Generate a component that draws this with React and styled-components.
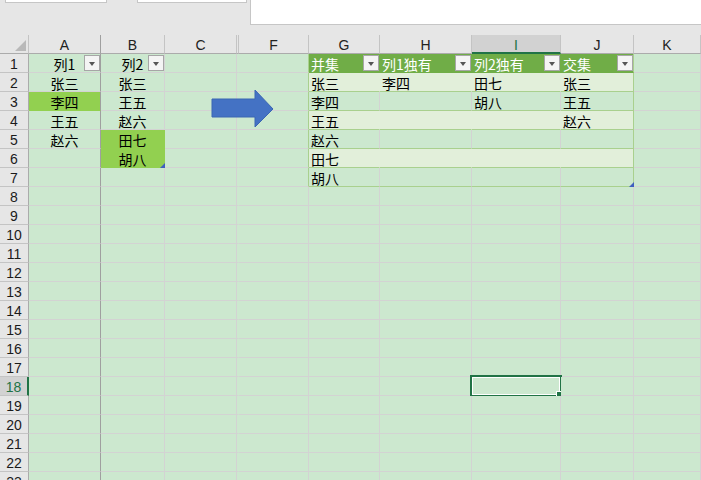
import React from "react";
import styled, { createGlobalStyle } from "styled-components";

const GlobalStyle = createGlobalStyle`
  html, body {
    margin: 0;
    padding: 0;
    background: #e6e6e6;
  }
`;

const BASE = "#cce8cf";
const GRID = "#d3d3d3";
const FROZEN = "#9f9f9f";
const HL = "#92d050";
const T_HEAD = "#70ad47";
const T_BAND = "#e2efda";
const T_LINE = "#a9d08e";
const SEL = "#217346";

const columns = [
  { key: "A", label: "A", width: "72px" },
  { key: "B", label: "B", width: "64px" },
  { key: "C", label: "C", width: "72px" },
  { key: "DE", label: "", width: "2px" },
  { key: "F", label: "F", width: "70px" },
  { key: "G", label: "G", width: "71px" },
  { key: "H", label: "H", width: "92px" },
  { key: "I", label: "I", width: "89px" },
  { key: "J", label: "J", width: "73px" },
  { key: "K", label: "K", width: "1fr" },
];

const values = {
  A: ["列1", "张三", "李四", "王五", "赵六"],
  B: ["列2", "张三", "王五", "赵六", "田七", "胡八"],
  G: ["并集", "张三", "李四", "王五", "赵六", "田七", "胡八"],
  H: ["列1独有", "李四"],
  I: ["列2独有", "田七", "胡八"],
  J: ["交集", "张三", "王五", "赵六"],
};

const highlighted = { A3: true, B5: true, B6: true };
const tableCols = ["G", "H", "I", "J"];
const ROWS = 23;
const SELECTED = { col: "I", row: 18 };

export default function App() {
  const cellProps = (key, row) => {
    const inTable = tableCols.includes(key) && row <= 7;
    const hl = highlighted[key + row];
    let bg = BASE;
    let rb = GRID;
    let bb = GRID;
    let color = "#000";
    if (key === "A") rb = FROZEN;
    if (key === "DE") rb = BASE;
    if (key === "F" && row <= 7) rb = T_LINE;
    if (hl) {
      bg = HL;
      bb = HL;
      if (key !== "A") rb = HL;
    }
    if (inTable) {
      if (row === 1) {
        bg = T_HEAD;
        rb = T_HEAD;
        bb = T_HEAD;
        color = "#fff";
      } else {
        bb = T_LINE;
        if (row % 2 === 0) {
          bg = T_BAND;
          rb = T_BAND;
        }
      }
      if (key === "J") rb = T_LINE;
    }
    return { $bg: bg, $rb: rb, $bb: bb, $color: color, $left: inTable };
  };

  const rows = [];
  for (let r = 1; r <= ROWS; r++) {
    const isSelRow = r === SELECTED.row;
    rows.push(
      <RowHead key={"rh" + r} $active={isSelRow}>
        {r}
      </RowHead>
    );
    columns.forEach((c) => {
      const text = (values[c.key] || [])[r - 1];
      const hasFilter = r === 1 && (c.key === "A" || c.key === "B" || tableCols.includes(c.key));
      rows.push(
        <Cell key={c.key + r} {...cellProps(c.key, r)}>
          {text}
          {hasFilter && <FilterButton />}
          {((c.key === "B" && r === 6) || (c.key === "J" && r === 7)) && <ResizeMark />}
          {c.key === SELECTED.col && isSelRow && (
            <Selection>
              <FillHandle />
            </Selection>
          )}
        </Cell>
      );
    });
  }

  return (
    <Page>
      <GlobalStyle />
      <TopBar>
        <NameBox />
        <FuncBox />
        <FormulaInput />
      </TopBar>
      <Sheet>
        <Corner />
        {columns.map((c) => (
          <ColHead key={c.key} $active={c.key === SELECTED.col} $frozen={c.key === "A"}>
            {c.label}
          </ColHead>
        ))}
        {rows}
        <Arrow width="64" height="40" viewBox="0 0 64 40">
          <path d="M1 10 H44 V1 L62 20 L44 38 V28 H1 Z" fill="#4472c4" stroke="#3b66b3" strokeWidth="1" />
        </Arrow>
      </Sheet>
    </Page>
  );
}

const Page = styled.div`
  width: 701px;
  height: 480px;
  overflow: hidden;
  background: #e6e6e6;
  font-family: "Noto Sans CJK SC", "Noto Sans", sans-serif;
`;

const TopBar = styled.div`
  height: 35px;
  display: flex;
  align-items: flex-start;
  gap: 30px;
  padding-left: 5px;
  box-sizing: border-box;
`;

const NameBox = styled.div`
  width: 100px;
  height: 2px;
  background: #fff;
  border: 1px solid #c6c6c6;
  border-top: none;
`;

const FuncBox = styled.div`
  width: 108px;
  height: 2px;
  background: #fff;
  border: 1px solid #c6c6c6;
  border-top: none;
`;

const FormulaInput = styled.div`
  margin-left: -27px;
  flex: 1;
  height: 24px;
  background: #fff;
  border-left: 1px solid #c6c6c6;
  border-bottom: 1px solid #c6c6c6;
`;

const Sheet = styled.div`
  position: relative;
  display: grid;
  grid-template-columns: 29px ${columns.map((c) => c.width).join(" ")};
  grid-auto-rows: 19px;
  background: ${BASE};
`;

const Corner = styled.div`
  position: relative;
  background: #e6e6e6;
  border-right: 1px solid #c4c4c4;
  border-bottom: 1px solid #ababab;
  &::after {
    content: "";
    position: absolute;
    right: 2px;
    bottom: 2px;
    width: 11px;
    height: 11px;
    background: #b9b9b9;
    clip-path: polygon(100% 0, 100% 100%, 0 100%);
  }
`;

const ColHead = styled.div`
  box-sizing: border-box;
  display: flex;
  align-items: center;
  justify-content: center;
  background: ${(p) => (p.$active ? "#d2d2d2" : "#e6e6e6")};
  color: ${(p) => (p.$active ? SEL : "#222")};
  font-family: "Liberation Sans", Arial, sans-serif;
  font-size: 14px;
  padding-top: 2px;
  border-right: 1px solid ${(p) => (p.$frozen ? FROZEN : "#c4c4c4")};
  border-bottom: ${(p) => (p.$active ? `2px solid ${SEL}` : "1px solid #ababab")};
`;

const RowHead = styled.div`
  box-sizing: border-box;
  display: flex;
  align-items: center;
  justify-content: center;
  background: ${(p) => (p.$active ? "#d2d2d2" : "#e6e6e6")};
  color: ${(p) => (p.$active ? SEL : "#1a1a1a")};
  font-family: "Liberation Sans", Arial, sans-serif;
  font-size: 14px;
  padding-top: 2px;
  border-right: ${(p) => (p.$active ? `2px solid ${SEL}` : "1px solid #ababab")};
  border-bottom: 1px solid #c4c4c4;
`;

const Cell = styled.div`
  position: relative;
  box-sizing: border-box;
  background: ${(p) => p.$bg};
  color: ${(p) => p.$color};
  border-right: 1px solid ${(p) => p.$rb};
  border-bottom: 1px solid ${(p) => p.$bb};
  font-size: 14px;
  line-height: 16px;
  padding-top: 2px;
  padding-left: ${(p) => (p.$left ? "2px" : "0")};
  text-align: ${(p) => (p.$left ? "left" : "center")};
  white-space: nowrap;
`;

const FilterButton = styled.span`
  position: absolute;
  right: 0;
  top: 1px;
  width: 16px;
  height: 16px;
  box-sizing: border-box;
  background: #f4f4f4;
  border: 1px solid #a6a6a6;
  &::after {
    content: "";
    position: absolute;
    left: 4px;
    top: 6px;
    border-left: 3.5px solid transparent;
    border-right: 3.5px solid transparent;
    border-top: 4px solid #555;
  }
`;

const ResizeMark = styled.span`
  position: absolute;
  right: -1px;
  bottom: -1px;
  width: 5px;
  height: 5px;
  background: #3f5fbf;
  clip-path: polygon(100% 0, 100% 100%, 0 100%);
`;

const Selection = styled.span`
  position: absolute;
  left: -2px;
  top: -2px;
  width: 92px;
  height: 22px;
  box-sizing: border-box;
  border: 2px solid ${SEL};
  box-shadow: inset 0 0 0 1px #fff;
`;

const FillHandle = styled.span`
  position: absolute;
  right: -4px;
  bottom: -4px;
  width: 6px;
  height: 6px;
  background: ${SEL};
  border: 1px solid #fff;
`;

const Arrow = styled.svg`
  position: absolute;
  left: 211px;
  top: 54px;
`;
